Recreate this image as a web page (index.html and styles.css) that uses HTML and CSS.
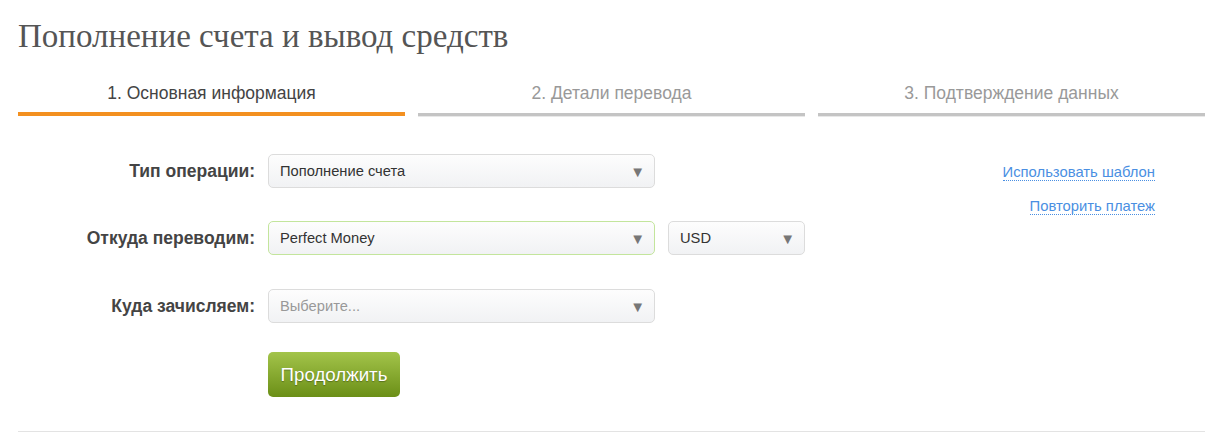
FILE: index.html
```html
<!DOCTYPE html>
<html lang="ru">
<head>
<meta charset="UTF-8">
<title>Пополнение счета и вывод средств</title>
<link rel="stylesheet" href="styles.css">
</head>
<body>
<div class="page">
<h1>Пополнение счета и вывод средств</h1>

<div class="steps">
<div class="step active">1. Основная информация</div>
<div class="step">2. Детали перевода</div>
<div class="step">3. Подтверждение данных</div>
</div>

<div class="form-area">
<div class="form">
<div class="row">
<label>Тип операции:</label>
<div class="select wide"><span>Пополнение счета</span><i>&#9660;</i></div>
</div>
<div class="row">
<label>Откуда переводим:</label>
<div class="select wide focused"><span>Perfect Money</span><i>&#9660;</i></div>
<div class="select small"><span>USD</span><i>&#9660;</i></div>
</div>
<div class="row target-row">
<label>Куда зачисляем:</label>
<div class="select wide"><span class="placeholder">Выберите...</span><i>&#9660;</i></div>
</div>
<div class="row submit-row">
<label></label>
<button type="button">Продолжить</button>
</div>
</div>
<div class="links">
<a href="#">Использовать шаблон</a>
<a href="#">Повторить платеж</a>
</div>
</div>
</div>
</body>
</html>
```
FILE: styles.css
```css
body {
margin: 0;
font-family: "Liberation Sans", Arial, sans-serif;
background-color: #fff;
color: #444;
}
.page {
width: 1187px;
margin-left: 18px;
padding-top: 18px;
border-bottom: 1px solid #e3e3e3;
padding-bottom: 34px;
}
h1 {
font-family: "Liberation Serif", Georgia, serif;
font-weight: normal;
font-size: 33px;
color: #555;
margin: 0 0 29px 0;
line-height: 36px;
}
.steps {
display: flex;
gap: 13px;
}
.step {
flex: 1;
text-align: center;
font-size: 17.5px;
line-height: 20px;
color: #999;
padding-bottom: 9px;
border-bottom: 3px solid #c4c4c4;
box-shadow: 0 1px 0 #e8e8e8;
}
.step.active {
color: #444;
border-bottom: 4px solid #f39020;
box-shadow: none;
}
.form-area {
display: flex;
justify-content: space-between;
padding-top: 38px;
}
.form {
display: flex;
flex-direction: column;
gap: 33px;
}
.target-row {
margin-top: 1px;
}
.submit-row {
margin-top: -4px;
}
.row {
display: flex;
align-items: center;
gap: 13px;
}
.row label {
width: 237px;
text-align: right;
font-weight: bold;
font-size: 17.5px;
color: #444;
}
.select {
display: flex;
align-items: center;
justify-content: space-between;
height: 34px;
box-sizing: border-box;
padding: 0 9px 0 11px;
border: 1px solid #dcdcdc;
border-radius: 5px;
background: linear-gradient(#fdfdfd, #f1f2f4);
font-size: 14.7px;
color: #333;
}
.select.wide {
width: 387px;
}
.select.small {
width: 137px;
}
.select.focused {
border-color: #c3e59c;
}
.select i {
font-style: normal;
font-size: 15px;
color: #777;
}
.placeholder {
color: #999;
}
button {
font-family: "Liberation Sans", Arial, sans-serif;
font-size: 18.7px;
color: #fff;
width: 132px;
height: 45px;
border: none;
border-radius: 5px;
background: linear-gradient(#a3c44a, #6b8f17);
text-shadow: 0 1px 1px rgba(0, 0, 0, 0.3);
cursor: pointer;
}
.links {
display: flex;
flex-direction: column;
align-items: flex-end;
gap: 17px;
padding-top: 10px;
padding-right: 50px;
}
.links a {
font-size: 14.8px;
color: #4a8fe2;
text-decoration: none;
border-bottom: 1px dotted #4a8fe2;
line-height: 16px;
}
```
